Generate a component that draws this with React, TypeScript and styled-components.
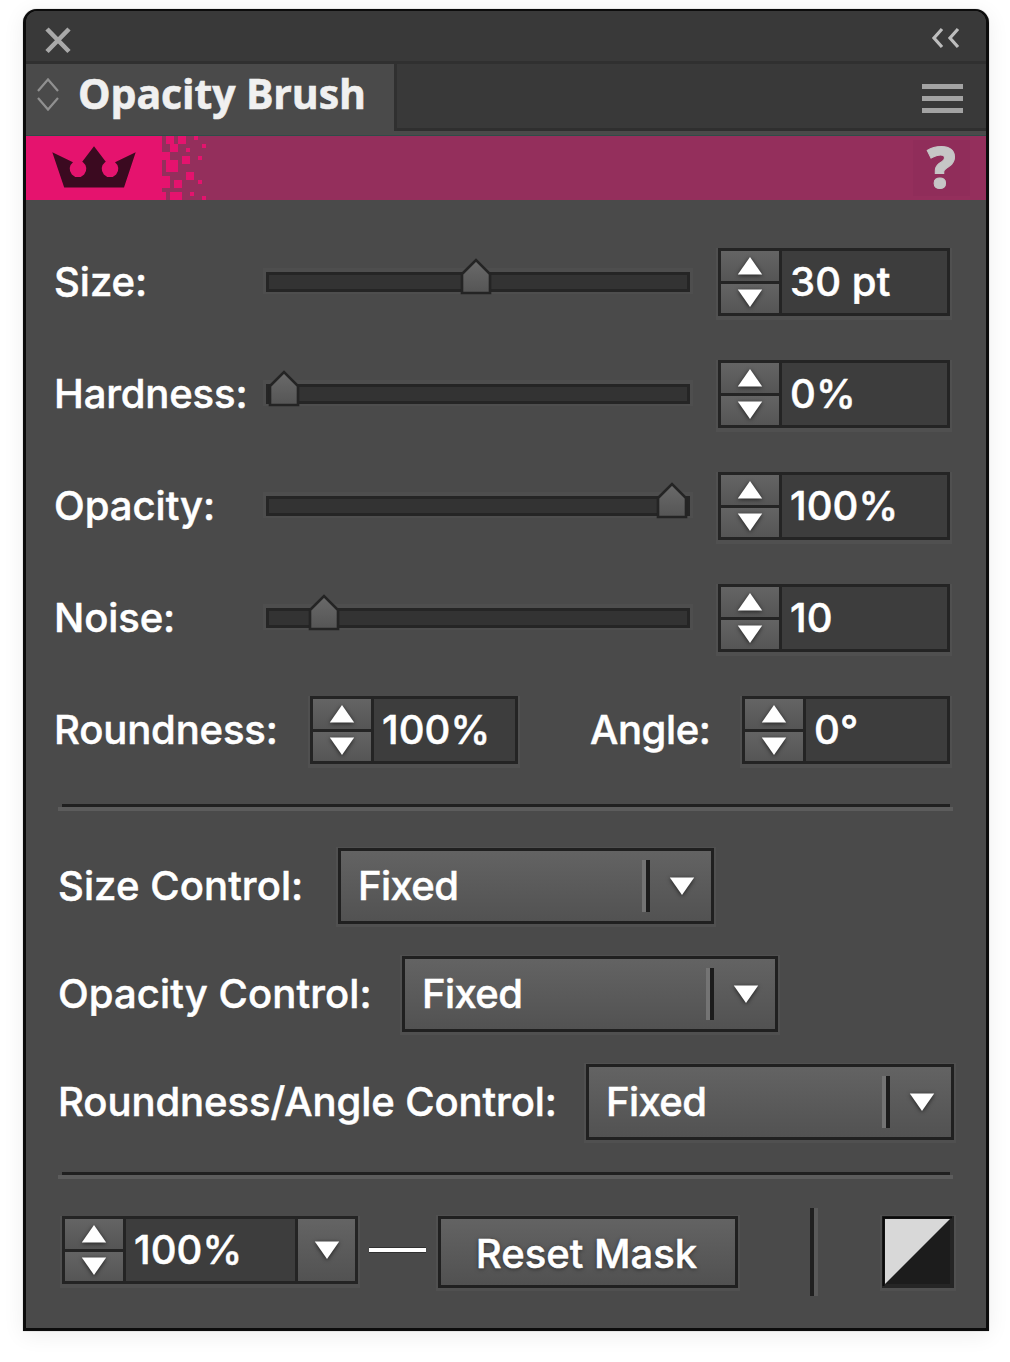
import React from "react";
import styled, { createGlobalStyle } from "styled-components";

const GlobalStyle = createGlobalStyle`
  * { box-sizing: border-box; }
  body {
    margin: 0;
    background: #fff;
    font-family: Inter, "Liberation Sans", sans-serif;
  }
`;

const Page = styled.main`
  width: 1010px;
  height: 1362px;
  padding: 9px 21px 31px 23px;
  overflow: hidden;
`;

const Panel = styled.section`
  width: 966px;
  height: 1322px;
  border: 3px solid #0c0c0c;
  border-top-width: 2px;
  border-radius: 14px 14px 0 0;
  background: #4a4a4a;
  box-shadow: 0 0 1px rgba(0, 0, 0, 0.6), 0 4px 22px rgba(0, 0, 0, 0.07);
  overflow: hidden;
`;

const TitleBar = styled.header`
  display: flex;
  justify-content: space-between;
  height: 53px;
  padding: 16px 26px 0 19px;
  background: #393939;
  border-bottom: 3px solid #303030;
`;

const TabBar = styled.div`
  display: flex;
  justify-content: space-between;
  height: 71px;
  background: linear-gradient(#393939 64px, #2f2f2f 64px, #2f2f2f 67px, #4a4a4a 67px);
`;

const Tab = styled.div`
  display: flex;
  width: 368px;
  height: 67px;
  padding: 12px 0 0 10px;
  background: #4a4a4a;
  box-shadow: 3px 0 0 #303030;
`;

const TabTitle = styled.h1`
  margin: -13px 0 0 17px;
  font: 700 41px/60px "Open Sans", sans-serif;
  letter-spacing: -0.1px;
  white-space: nowrap;
  color: #f0f0f0;
  -webkit-text-stroke: 0.6px #f0f0f0;
`;

const MenuButton = styled.button`
  display: flex;
  flex-direction: column;
  gap: 7px;
  margin: 20px 23px 0 0;
  padding: 0;
  width: 41px;
  border: 0;
  background: none;
`;

const MenuBar = styled.span`
  height: 5px;
  background: #a3a3a3;
`;

const Banner = styled.div`
  display: flex;
  justify-content: space-between;
  height: 65px;
  border-top: 1px solid #2f4c48;
  background: #942f5c;
`;

const HelpButton = styled.button`
  width: 57px;
  height: 56px;
  margin: 4px 16px 0 0;
  padding: 0;
  border: 0;
  background: #902d5a;
  color: #c6c6c6;
  font: 800 56px/48px "Open Sans", sans-serif;
  padding-bottom: 4px;
  -webkit-text-stroke: 1px #c6c6c6;
`;

const Body = styled.div`
  padding: 26px 32px 0;
`;

const Row = styled.div`
  display: flex;
  align-items: center;
  height: 112px;
`;

const Label = styled.label<{ $w: number; $ls?: number; $gap?: number }>`
  flex: none;
  width: ${(p) => p.$w}px;
  margin-left: ${(p) => p.$gap ?? 0}px;
  font-size: 40px;
  font-weight: 500;
  line-height: 48px;
  letter-spacing: ${(p) => p.$ls ?? 0}px;
  white-space: nowrap;
  color: #fff;
  -webkit-text-stroke: 0.5px #fff;
`;

const RowLabel = styled(Label)`
  margin-left: -4px;
`;

const Track = styled.div`
  position: relative;
  flex: none;
  width: 424px;
  height: 20px;
  border: 3px solid #252525;
  background: #333;
  box-shadow: 0 -1px 0 3px #4e4e4e;
`;

const Thumb = styled.svg`
  position: absolute;
  top: -17px;
  width: 34px;
  height: 37px;
`;

const SpinnerBox = styled.div<{ $w: number; $ml: number }>`
  display: flex;
  flex: none;
  width: ${(p) => p.$w}px;
  height: 68px;
  margin-left: ${(p) => p.$ml}px;
  border: 3px solid #242424;
  background: #3d3d3d;
  box-shadow: 0 2px 0 2px #505050;
`;

const Steps = styled.div`
  display: grid;
  flex: none;
  grid-template-rows: 1fr 1fr;
  gap: 3px;
  width: 61px;
  background: #242424;
  border-right: 3px solid #242424;
`;

const StepButton = styled.button`
  display: grid;
  place-items: center;
  padding: 0;
  border: 0;
  background: linear-gradient(#646464, #555);
`;

const Value = styled.output`
  flex: 1;
  padding-left: 8px;
  font-size: 40px;
  font-weight: 500;
  line-height: 62px;
  letter-spacing: 0.1px;
  white-space: nowrap;
  color: #fff;
  -webkit-text-stroke: 0.5px #fff;
`;

const DropStep = styled.button`
  display: grid;
  place-items: center;
  width: 60px;
  padding: 0;
  border: 0;
  border-left: 3px solid #242424;
  background: linear-gradient(#646464, #525252);
`;

const Divider = styled.hr`
  height: 7px;
  margin: 18px 1px 0 0;
  border: 0;
  background:
    linear-gradient(#202020, #202020) 4px 0 / calc(100% - 7px) 3px no-repeat,
    linear-gradient(#5c5c5c, #5c5c5c) 0 3px / 100% 4px no-repeat;
`;

const SelectRow = styled(Row)`
  height: 108px;
`;

const SelectGroup = styled.div`
  padding: 21px 0 16px;
  & + ${Divider} { margin-top: 0; }
`;

const Select = styled.div<{ $w: number }>`
  display: flex;
  align-items: center;
  width: ${(p) => p.$w}px;
  height: 76px;
  padding-left: 17px;
  border: 3px solid #202020;
  background: linear-gradient(#636363, #525252);
  box-shadow: 0 1px 0 2px #505050;
  color: #fff;
`;

const SelectValue = styled.span`
  padding-bottom: 1px;
  font-size: 40px;
  font-weight: 500;
  line-height: 48px;
  letter-spacing: -0.6px;
  -webkit-text-stroke: 0.5px #fff;
`;

const SelectSeparator = styled.span`
  width: 8px;
  height: 52px;
  margin: 0 19px 0 auto;
  border-left: 4px solid #747474;
  border-right: 4px solid #1c1c1c;
`;

const SelectArrow = styled.span`
  display: flex;
  margin-right: 16px;
`;

const Footer = styled.footer`
  display: flex;
  align-items: flex-start;
  padding: 37px 0 0 4px;
`;

const Dash = styled.span`
  width: 57px;
  height: 6px;
  margin: 31px 12px 0 11px;
  border: solid #303030;
  border-width: 1px 0;
  background: #fff;
`;

const ResetButton = styled.button`
  width: 300px;
  height: 72px;
  padding: 3px 3px 0 0;
  border: 3px solid #202020;
  background: linear-gradient(#636363, #515151);
  box-shadow: 0 1px 0 2px #505050;
  color: #fff;
  font: 500 40px/63px Inter, sans-serif;
  letter-spacing: 0;
  text-shadow: 0 1px 4px rgba(0, 0, 0, 0.55);
  -webkit-text-stroke: 0.5px #fff;
`;

const FooterRule = styled.span`
  width: 8px;
  height: 88px;
  margin: -8px 0 0 72px;
  border-left: 3px solid #202020;
  border-right: 4px solid #5a5a5a;
  background: #202020;
`;

const SwatchFrame = styled.div`
  width: 72px;
  height: 72px;
  margin-left: 64px;
  box-shadow: 0 1px 0 2px #505050;
`;

const Shadowed = styled.svg`
  display: block;
  overflow: visible;
  filter: drop-shadow(0 1px 2px rgba(0, 0, 0, 0.65));
`;

function Arrow({ up = false }: { up?: boolean }) {
  return (
    <Shadowed width="26" height="18" viewBox="0 0 26 18">
      <path d={up ? "M13 0L25.2 17.6H.8Z" : "M.8 .4H25.2L13 18Z"} fill="#fff" />
    </Shadowed>
  );
}

function Spinner({ value, width, gap, menu }: { value: string; width: number; gap: number; menu?: boolean }) {
  return (
    <SpinnerBox $w={width} $ml={gap}>
      <Steps>
        <StepButton aria-label="Increase"><Arrow up /></StepButton>
        <StepButton aria-label="Decrease"><Arrow /></StepButton>
      </Steps>
      <Value>{value}</Value>
      {menu && <DropStep aria-label="Presets"><Arrow /></DropStep>}
    </SpinnerBox>
  );
}

function Slider({ at }: { at: number }) {
  return (
    <Track>
      <Thumb viewBox="0 0 34 37" style={{ left: at - 20 }}>
        <defs>
          <linearGradient id="thumb" x1="0" y1="0" x2="0" y2="1">
            <stop offset="0" stopColor="#6a6a6a" />
            <stop offset="1" stopColor="#555" />
          </linearGradient>
        </defs>
        <path d="M3 16L17 2L31 16V35H3Z" fill="url(#thumb)" stroke="#242424" strokeWidth="2.6" />
      </Thumb>
    </Track>
  );
}

const PIXELS = [
  [4, 0, 8, 8], [16, 0, 8, 8], [32, 0, 4, 4], [8, 8, 8, 8], [40, 8, 4, 4], [24, 12, 4, 4],
  [0, 16, 8, 8], [36, 20, 4, 4], [20, 20, 8, 8], [4, 24, 12, 12], [24, 36, 8, 8], [0, 40, 8, 12],
  [12, 44, 8, 8], [36, 44, 4, 4], [0, 56, 4, 8], [8, 56, 12, 8], [28, 56, 4, 4], [40, 60, 4, 4],
];

function Brand() {
  return (
    <svg width="184" height="64" viewBox="0 0 184 64">
      <rect width="136" height="64" fill="#e5136e" />
      {PIXELS.map(([x, y, w, h]) => (
        <rect key={`${x}-${y}`} x={136 + x} y={y} width={w} height={h} fill="#e5136e" />
      ))}
      <path
        d="M26.3 16.2L47 26.2A8.3 8.3 0 1 0 57 26.2L56.2 25.8L68 10.3L79.8 25.8L79 26.2A8.3 8.3 0 1 0 89 26.2L109.7 16.2L98 51.5H38.2Z"
        fill="#3b0a20"
      />
    </svg>
  );
}

const sliders = [
  { name: "Size:", at: 210, value: "30 pt", ls: 0 },
  { name: "Hardness:", at: 18, value: "0%", ls: -0.15 },
  { name: "Opacity:", at: 406, value: "100%", ls: 0 },
  { name: "Noise:", at: 58, value: "10", ls: -0.1 },
];

const selects = [
  { name: "Size Control:", label: 280, width: 376, ls: 0.1 },
  { name: "Opacity Control:", label: 344, width: 376, ls: 0.1 },
  { name: "Roundness/Angle Control:", label: 528, width: 368, ls: -0.07 },
];

export default function App() {
  return (
    <Page>
      <GlobalStyle />
      <Panel>
        <TitleBar>
          <svg width="26" height="27" viewBox="0 0 26 27" stroke="#a9a9a9" strokeWidth="4.6">
            <path d="M2 2L24 24.5M24 2L2 24.5" />
          </svg>
          <svg width="30" height="24" viewBox="0 0 30 24" fill="none" stroke="#bdbdbd" strokeWidth="3.2">
            <path d="M12 2L4 11L12 20M28 2L20 11L28 20" />
          </svg>
        </TitleBar>
        <TabBar>
          <Tab>
            <svg width="25" height="36" viewBox="0 0 25 36" fill="none" stroke="#909090" strokeWidth="2.2">
              <path d="M2 15L12 3.5L22 15M2 22L12 33.5L22 22" />
            </svg>
            <TabTitle>Opacity Brush</TabTitle>
          </Tab>
          <MenuButton aria-label="Panel menu"><MenuBar /><MenuBar /><MenuBar /></MenuButton>
        </TabBar>
        <Banner>
          <Brand />
          <HelpButton>?</HelpButton>
        </Banner>
        <Body>
          {sliders.map((s) => (
            <Row key={s.name}>
              <RowLabel $w={212} $ls={s.ls}>{s.name}</RowLabel>
              <Slider at={s.at} />
              <Spinner value={s.value} width={232} gap={28} />
            </Row>
          ))}
          <Row>
            <RowLabel $w={256} $ls={-0.15}>Roundness:</RowLabel>
            <Spinner value="100%" width={208} gap={0} />
            <Label $w={152} $gap={72} $ls={-0.4}>Angle:</Label>
            <Spinner value="0°" width={208} gap={0} />
          </Row>
          <Divider />
          <SelectGroup>
            {selects.map((s) => (
              <SelectRow key={s.name}>
                <Label $w={s.label} $ls={s.ls}>{s.name}</Label>
                <Select $w={s.width}>
                  <SelectValue>Fixed</SelectValue>
                  <SelectSeparator />
                  <SelectArrow><Arrow /></SelectArrow>
                </Select>
              </SelectRow>
            ))}
          </SelectGroup>
          <Divider />
          <Footer>
            <Spinner value="100%" width={296} gap={0} menu />
            <Dash />
            <ResetButton>Reset Mask</ResetButton>
            <FooterRule />
            <SwatchFrame>
              <svg width="72" height="72" viewBox="0 0 72 72" display="block">
                <rect width="72" height="72" fill="#252525" />
                <rect x="2" y="2" width="66" height="66" fill="#1c1c1c" />
                <path d="M1.5 70V1.5H70" fill="none" stroke="#0a0a0a" strokeWidth="2" />
                <path d="M3 3H68L3 68Z" fill="#d8d8d8" />
              </svg>
            </SwatchFrame>
          </Footer>
        </Body>
      </Panel>
    </Page>
  );
}
